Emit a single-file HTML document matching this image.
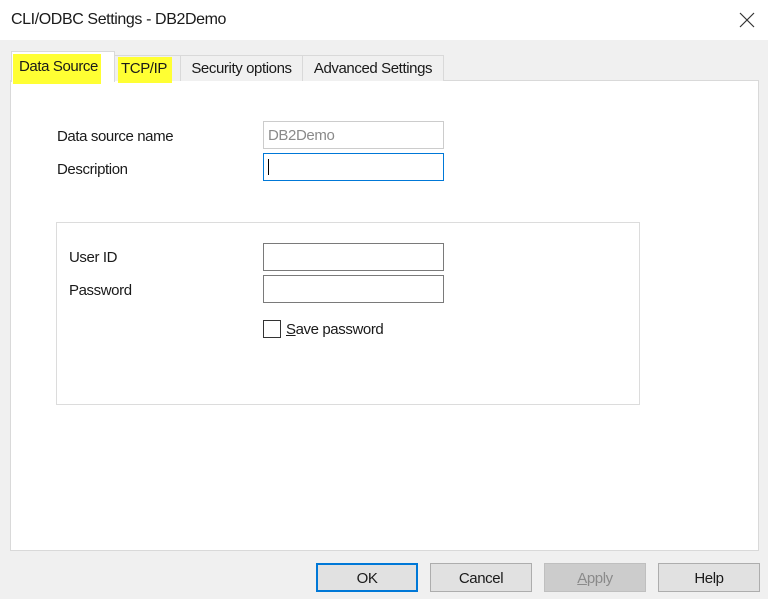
<!DOCTYPE html>
<html><head><style>
*{margin:0;padding:0;box-sizing:border-box}
body{width:768px;height:599px;background:#f0f0f0;position:relative;overflow:hidden;font-family:"Liberation Sans",sans-serif;font-size:15px;color:#1a1a1a;letter-spacing:-0.4px}
.a{position:absolute}
.title{left:0;top:0;width:768px;height:40px;background:#fff}
.panel{left:10px;top:80px;width:749px;height:471px;background:#fff;border:1px solid #d9d9d9}
.tab{top:55px;height:26px;border:1px solid #d9d9d9;border-bottom:none;background:#f0f0f0;line-height:26px;text-align:center}
.hl{background:#ffff33}
.inp{border:1px solid #7a7a7a;background:#fff;height:28px}
.btn{top:563px;height:29px;width:102px;border:1px solid #adadad;background:#e1e1e1;text-align:center;line-height:29px}
</style></head><body>
<div class="a title"></div>
<div class="a" style="left:11px;top:11px;font-size:16px">CLI/ODBC Settings - DB2Demo</div>
<svg class="a" style="left:739px;top:12px" width="16" height="16"><path d="M1 1L15 15M15 1L1 15" stroke="#333" stroke-width="1.2"/></svg>
<div class="a panel"></div>
<div class="a tab" style="left:114px;width:67px"></div>
<div class="a tab" style="left:180px;width:123px">Security options</div>
<div class="a tab" style="left:302px;width:142px">Advanced Settings</div>
<div class="a" style="left:11px;top:51px;width:104px;height:31px;background:#fff;border:1px solid #d9d9d9;border-bottom:none"></div>
<div class="a hl" style="left:13px;top:54px;width:88px;height:30px"></div>
<div class="a hl" style="left:118px;top:57px;width:54px;height:26px"></div>
<div class="a" style="left:19px;top:58px">Data Source</div>
<div class="a" style="left:121px;top:60px">TCP/IP</div>
<div class="a" style="left:57px;top:128px">Data source name</div>
<div class="a" style="left:57px;top:161px">Description</div>
<div class="a inp" style="left:263px;top:121px;width:181px;border-color:#ccc;color:#8a8a8a;padding:4px 4px;line-height:20px">DB2Demo</div>
<div class="a inp" style="left:263px;top:153px;width:181px;border-color:#0078d7"></div>
<div class="a" style="left:268px;top:159px;width:1px;height:16px;background:#000"></div>
<div class="a" style="left:56px;top:222px;width:584px;height:183px;border:1px solid #dcdcdc"></div>
<div class="a" style="left:69px;top:249px">User ID</div>
<div class="a" style="left:69px;top:282px">Password</div>
<div class="a inp" style="left:263px;top:243px;width:181px"></div>
<div class="a inp" style="left:263px;top:275px;width:181px"></div>
<div class="a" style="left:263px;top:320px;width:18px;height:18px;border:1px solid #333;background:#fff"></div>
<div class="a" style="left:286px;top:321px"><u>S</u>ave password</div>
<div class="a btn" style="left:316px;border:2px solid #0078d7;line-height:27px">OK</div>
<div class="a btn" style="left:430px">Cancel</div>
<div class="a btn" style="left:544px;background:#ccc;border-color:#bfbfbf;color:#8a8a8a"><u>A</u>pply</div>
<div class="a btn" style="left:658px">Help</div>
</body></html>
